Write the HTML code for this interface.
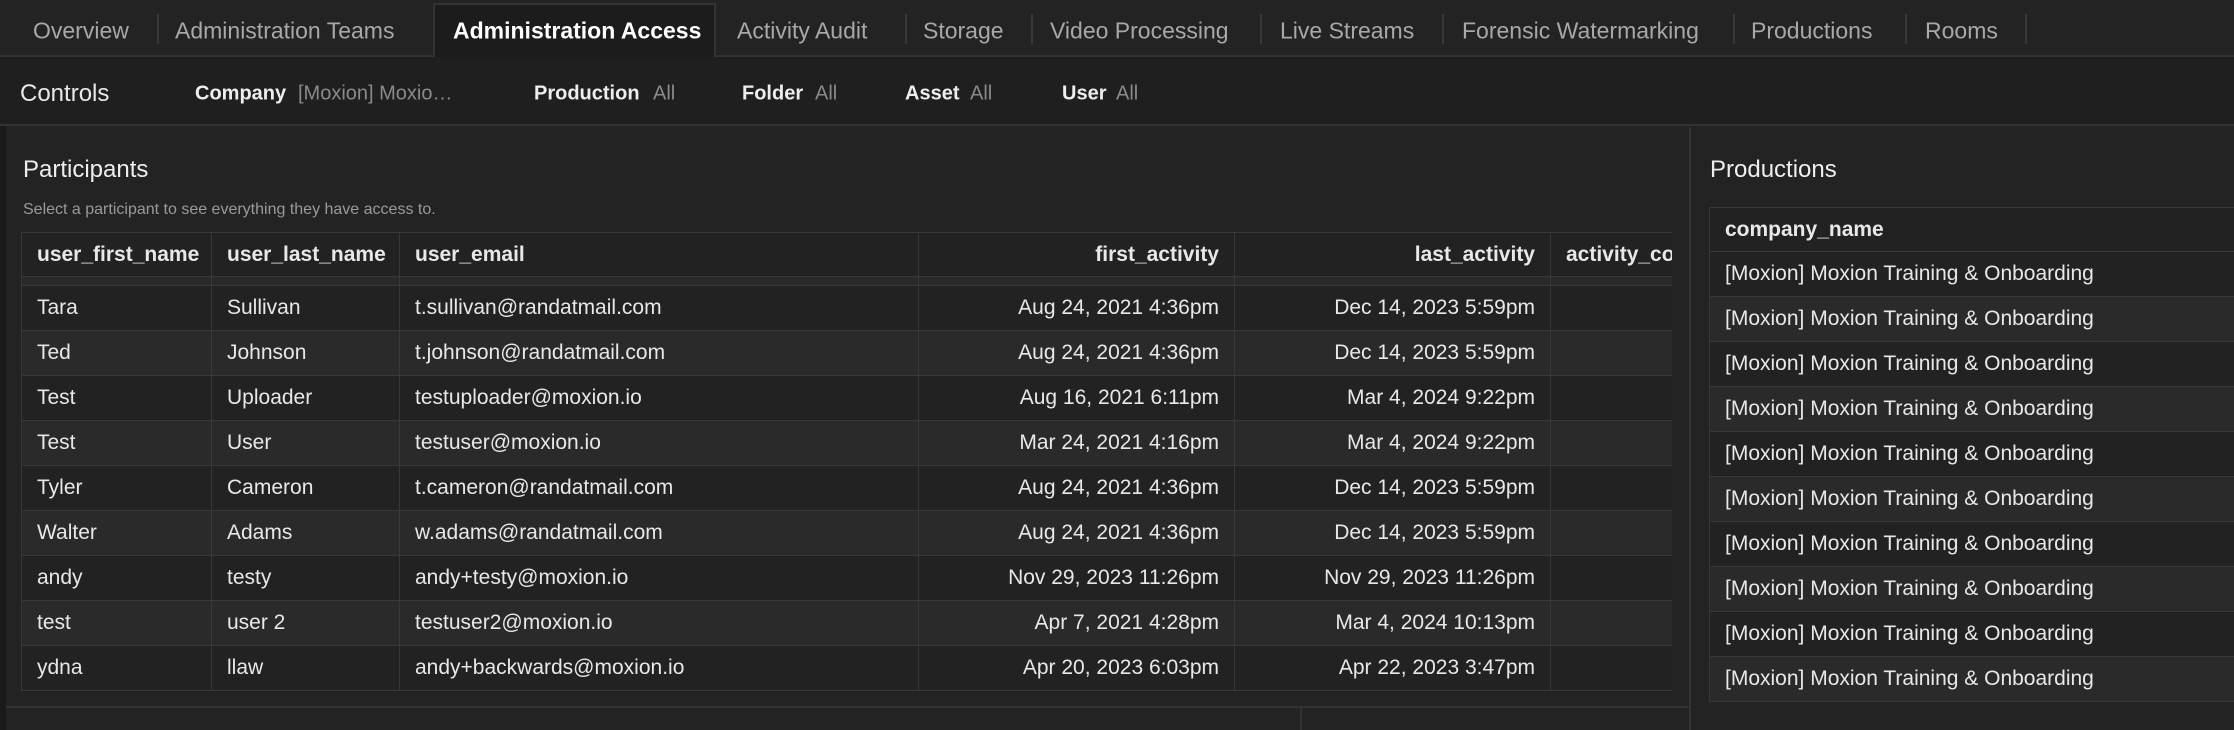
<!DOCTYPE html>
<html><head><meta charset="utf-8"><style>
*{box-sizing:border-box;margin:0;padding:0}
body{width:2234px;height:730px;background:#222;font-family:"Liberation Sans",sans-serif;color:#e8e8e8;position:relative;overflow:hidden}
.a{position:absolute;white-space:nowrap}
.tabs{position:absolute;left:0;top:0;width:2234px;height:57px;background:#232323;border-bottom:2px solid #333}
.tab{position:absolute;top:31px;transform:translateY(-50%);font-size:23px;color:#a8a8a8}
.sep{position:absolute;top:14px;width:2px;height:30px;background:#383838}
.ctrl{position:absolute;left:0;top:57px;width:2234px;height:69px;background:#1f1f1f;border-bottom:2px solid #333}
.cl{position:absolute;top:94px;transform:translateY(-50%);font-size:20px;font-weight:bold;color:#eee}
.cv{position:absolute;top:94px;transform:translateY(-50%);font-size:20px;color:#8a8a8a}
table{border-collapse:collapse;position:absolute;table-layout:fixed}
td,th{border:1.5px solid #383838;font-size:21px;padding:0 15px;overflow:hidden;white-space:nowrap;height:45px}
th{font-weight:bold;text-align:left;height:44px}
.r{text-align:right}
tr.d td{background:#222}
tr.l td{background:#2a2a2a}
</style></head><body>
<div class="a" style="left:0;top:0;width:6px;height:730px;background:#1a1a1a"></div>
<div class="tabs"></div>
<div class="a" style="left:433px;top:3px;width:283px;height:56px;background:#1c1c1c;border:2px solid #333;border-bottom:none"></div>
<div class="sep" style="left:157px"></div><div class="sep" style="left:905px"></div><div class="sep" style="left:1031px"></div><div class="sep" style="left:1260px"></div><div class="sep" style="left:1442px"></div><div class="sep" style="left:1733px"></div><div class="sep" style="left:1905px"></div><div class="sep" style="left:2025px"></div>
<div class="tab" style="left:33px">Overview</div>
<div class="tab" style="left:175px">Administration Teams</div>
<div class="tab" style="left:453px;color:#fff;font-weight:bold">Administration Access</div>
<div class="tab" style="left:737px">Activity Audit</div>
<div class="tab" style="left:923px">Storage</div>
<div class="tab" style="left:1050px">Video Processing</div>
<div class="tab" style="left:1280px">Live Streams</div>
<div class="tab" style="left:1462px">Forensic Watermarking</div>
<div class="tab" style="left:1751px">Productions</div>
<div class="tab" style="left:1925px">Rooms</div>
<div class="ctrl"></div>
<div class="a" style="left:20px;top:94px;transform:translateY(-50%);font-size:24px;color:#e8e8e8">Controls</div>
<div class="cl" style="left:195px">Company</div><div class="cv" style="left:298px">[Moxion] Moxio…</div>
<div class="cl" style="left:534px">Production</div><div class="cv" style="left:653px">All</div>
<div class="cl" style="left:742px">Folder</div><div class="cv" style="left:815px">All</div>
<div class="cl" style="left:905px">Asset</div><div class="cv" style="left:970px">All</div>
<div class="cl" style="left:1062px">User</div><div class="cv" style="left:1116px">All</div>
<div class="a" style="left:6px;top:127px;width:1683px;height:603px;background:#232323"></div>
<div class="a" style="left:1689px;top:127px;width:2px;height:603px;background:#333"></div>
<div class="a" style="left:1691px;top:127px;width:543px;height:603px;background:#232323"></div>
<div class="a" style="left:23px;top:156px;font-size:24px;color:#eee">Participants</div>
<div class="a" style="left:23px;top:201px;font-size:16px;color:#9a9a9a">Select a participant to see everything they have access to.</div>
<div class="a" style="left:21px;top:232px;width:1651px;height:462px;overflow:hidden">
<table style="left:0;top:0;width:1730px">
<colgroup><col style="width:190px"><col style="width:188px"><col style="width:519px"><col style="width:316px"><col style="width:316px"><col style="width:201px"></colgroup>
<tr style="background:#222"><th>user_first_name</th><th>user_last_name</th><th>user_email</th><th class="r">first_activity</th><th class="r">last_activity</th><th>activity_count</th></tr>
<tr class="l"><td style="height:9px"></td><td style="height:9px"></td><td style="height:9px"></td><td style="height:9px"></td><td style="height:9px"></td><td style="height:9px"></td></tr>
<tr class="d"><td>Tara</td><td>Sullivan</td><td>t.sullivan@randatmail.com</td><td class="r">Aug 24, 2021 4:36pm</td><td class="r">Dec 14, 2023 5:59pm</td><td></td></tr>
<tr class="l"><td>Ted</td><td>Johnson</td><td>t.johnson@randatmail.com</td><td class="r">Aug 24, 2021 4:36pm</td><td class="r">Dec 14, 2023 5:59pm</td><td></td></tr>
<tr class="d"><td>Test</td><td>Uploader</td><td>testuploader@moxion.io</td><td class="r">Aug 16, 2021 6:11pm</td><td class="r">Mar 4, 2024 9:22pm</td><td></td></tr>
<tr class="l"><td>Test</td><td>User</td><td>testuser@moxion.io</td><td class="r">Mar 24, 2021 4:16pm</td><td class="r">Mar 4, 2024 9:22pm</td><td></td></tr>
<tr class="d"><td>Tyler</td><td>Cameron</td><td>t.cameron@randatmail.com</td><td class="r">Aug 24, 2021 4:36pm</td><td class="r">Dec 14, 2023 5:59pm</td><td></td></tr>
<tr class="l"><td>Walter</td><td>Adams</td><td>w.adams@randatmail.com</td><td class="r">Aug 24, 2021 4:36pm</td><td class="r">Dec 14, 2023 5:59pm</td><td></td></tr>
<tr class="d"><td>andy</td><td>testy</td><td>andy+testy@moxion.io</td><td class="r">Nov 29, 2023 11:26pm</td><td class="r">Nov 29, 2023 11:26pm</td><td></td></tr>
<tr class="l"><td>test</td><td>user 2</td><td>testuser2@moxion.io</td><td class="r">Apr 7, 2021 4:28pm</td><td class="r">Mar 4, 2024 10:13pm</td><td></td></tr>
<tr class="d"><td>ydna</td><td>llaw</td><td>andy+backwards@moxion.io</td><td class="r">Apr 20, 2023 6:03pm</td><td class="r">Apr 22, 2023 3:47pm</td><td></td></tr>
</table></div>
<div class="a" style="left:6px;top:706px;width:1683px;height:2px;background:#333"></div>
<div class="a" style="left:1300px;top:706px;width:2px;height:24px;background:#333"></div>
<div class="a" style="left:1710px;top:156px;font-size:24px;color:#eee">Productions</div>
<div class="a" style="left:1709px;top:207px;width:525px;height:523px;overflow:hidden">
<table style="left:0;top:0;width:600px">
<tr style="background:#222"><th>company_name</th></tr>
<tr class="d"><td>[Moxion] Moxion Training &amp; Onboarding</td></tr>
<tr class="l"><td>[Moxion] Moxion Training &amp; Onboarding</td></tr>
<tr class="d"><td>[Moxion] Moxion Training &amp; Onboarding</td></tr>
<tr class="l"><td>[Moxion] Moxion Training &amp; Onboarding</td></tr>
<tr class="d"><td>[Moxion] Moxion Training &amp; Onboarding</td></tr>
<tr class="l"><td>[Moxion] Moxion Training &amp; Onboarding</td></tr>
<tr class="d"><td>[Moxion] Moxion Training &amp; Onboarding</td></tr>
<tr class="l"><td>[Moxion] Moxion Training &amp; Onboarding</td></tr>
<tr class="d"><td>[Moxion] Moxion Training &amp; Onboarding</td></tr>
<tr class="l"><td>[Moxion] Moxion Training &amp; Onboarding</td></tr>
</table></div>
</body></html>
